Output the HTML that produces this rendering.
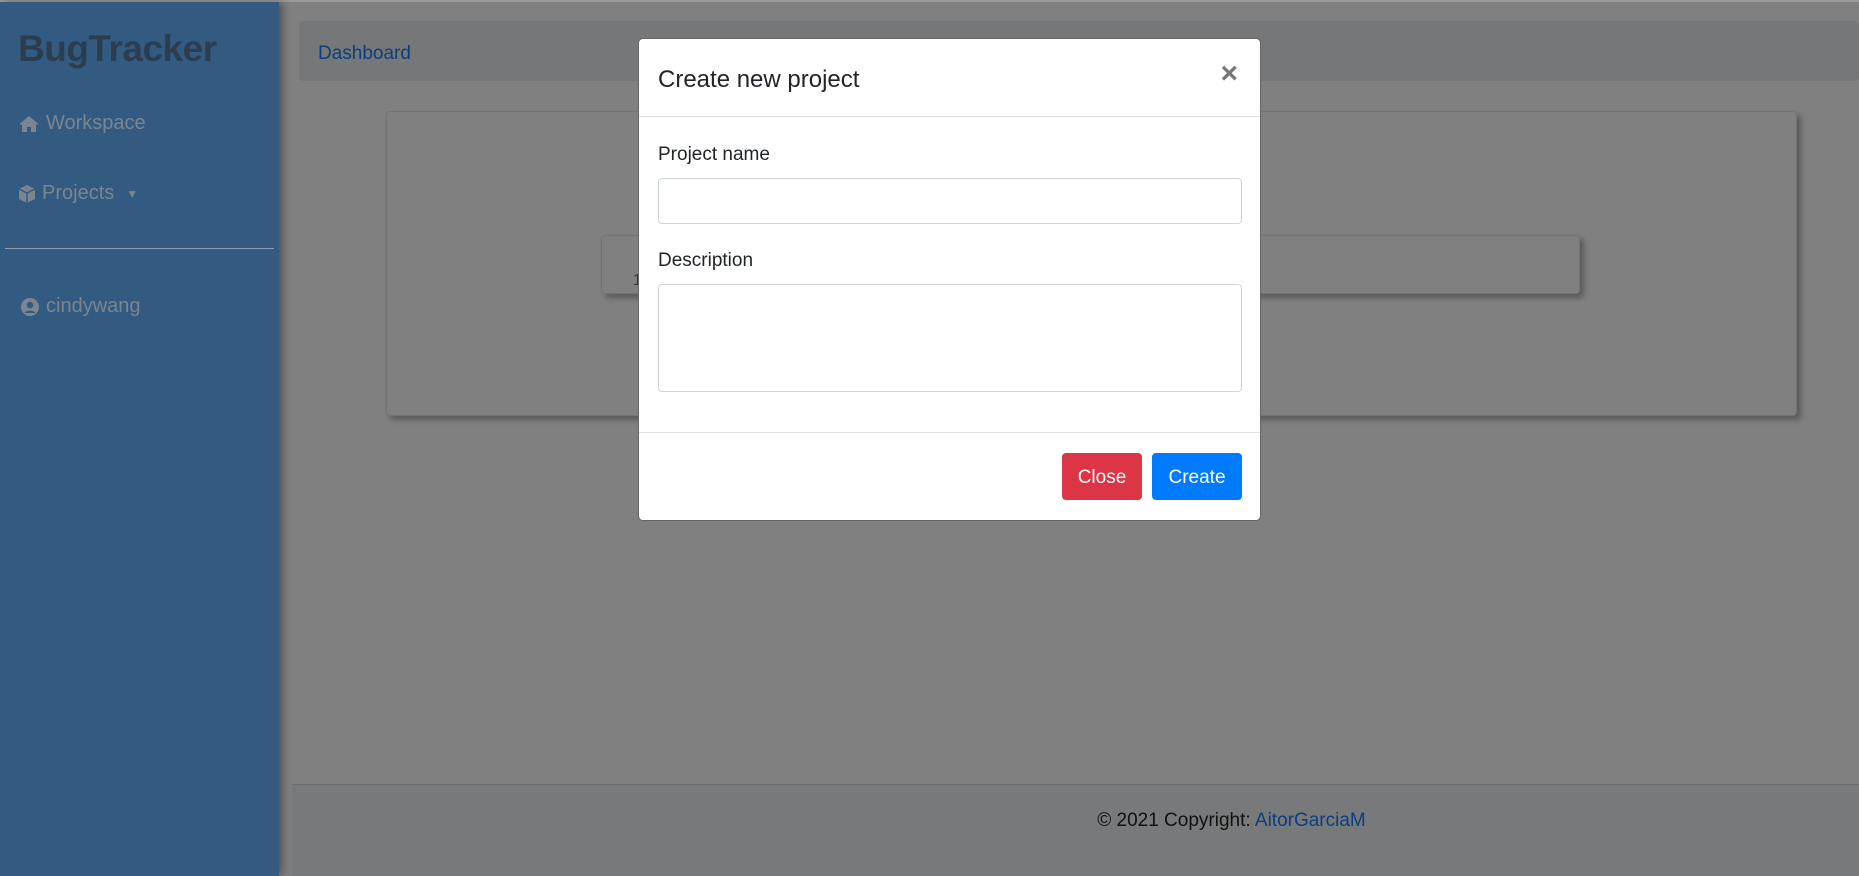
<!DOCTYPE html>
<html><head><meta charset="utf-8"><style>
*{box-sizing:border-box;margin:0;padding:0}
body{width:1859px;height:876px;overflow:hidden;font-family:"Liberation Sans",sans-serif;background:#808080;position:relative}
.top{position:absolute;left:0;top:0;width:1859px;height:2px;background:#9a9a9a}
.side{position:absolute;left:0;top:2px;width:279px;height:874px;background:#335a80;box-shadow:4px 0 8px rgba(0,0,0,.35)}
.brand{position:absolute;left:18px;top:26px;font-size:37px;font-weight:bold;color:#2c3d50;letter-spacing:-0.5px}
.nav{position:absolute;left:18px;font-size:20px;color:#7a8590;display:flex;align-items:center;gap:6px}
.hr{position:absolute;left:5px;top:246px;width:269px;height:1px;background:#8a9bb0}
.crumb{position:absolute;left:299px;top:21px;width:1560px;height:60px;background:#767778;border-radius:4px}
.crumb span{position:absolute;left:19px;top:22px;font-size:19px;color:#0c3e80}
.card{position:absolute;left:386px;top:111px;width:1411px;height:305px;background:#808080;border:1px solid #747474;border-radius:4px;box-shadow:4px 4px 6px rgba(0,0,0,.3)}
.inner{position:absolute;left:601px;top:235px;width:979px;height:59px;background:#808080;border:1px solid #747474;border-radius:4px;box-shadow:4px 4px 6px rgba(0,0,0,.3)}
.inner span{position:absolute;left:31px;top:36px;font-size:16px;color:#333}
.foot{position:absolute;left:292px;top:784px;width:1567px;height:92px;background:#78797a;border-top:1px solid #6e6e6e}
.foot p{position:absolute;left:0;right:0;top:25px;text-align:center;font-size:19px;color:#111;padding-left:312px}
.foot a{color:#0c3e80;text-decoration:none}
.modal{position:absolute;left:638px;top:38px;width:623px;height:483px;background:#fff;border-radius:5px;border:1px solid #666}
.mh{height:78px;border-bottom:1px solid #dee2e6;position:relative}
.mh h5{position:absolute;left:19px;top:27px;font-size:24px;font-weight:normal;color:#212529}
.x{position:absolute;right:22px;top:18px;font-size:30px;color:#777;font-weight:bold}
.lbl{position:absolute;left:19px;font-size:19px;color:#212529}
.inp{position:absolute;left:19px;width:584px;border:1px solid #ced4da;border-radius:4px}
.mf{position:absolute;left:0;top:393px;width:621px;border-top:1px solid #dee2e6}
.btn{position:absolute;top:414px;height:47px;border-radius:4px;color:#fff;font-size:19px;display:flex;align-items:center;justify-content:center;padding-top:3px}
</style></head><body>
<div class="top"></div>
<div class="side">
<div class="brand">BugTracker</div>
<div class="nav" style="top:110px"><svg width="22" height="18" viewBox="0 0 22 18"><path d="M11 1L1 9.5h3V17h5v-5h4v5h5V9.5h3z" fill="#7a8590"/></svg>Workspace</div>
<div class="nav" style="top:180px"><svg width="18" height="20" viewBox="0 0 18 20"><path d="M9 1L1 5v10l8 4 8-4V5z" fill="#7a8590"/><path d="M1 5l8 4 8-4M9 9v10" stroke="#335a80" stroke-width="1.5" fill="none"/></svg>Projects <span style="font-size:12px;margin-left:6px">▼</span></div>
<div class="hr"></div>
<div class="nav" style="top:293px;left:20px"><svg width="20" height="20" viewBox="0 0 20 20"><circle cx="10" cy="10" r="9" fill="#7a8590"/><circle cx="10" cy="8" r="3.3" fill="#335a80"/><path d="M4.5 16c1.5-3 9.5-3 11 0" fill="#335a80"/></svg>cindywang</div>
</div>
<div class="crumb"><span>Dashboard</span></div>
<div class="card"></div>
<div class="inner"><span>1</span></div>
<div class="foot"><p>© 2021 Copyright: <a>AitorGarciaM</a></p></div>
<div class="modal">
<div class="mh"><h5>Create new project</h5><div class="x">×</div></div>
<div class="lbl" style="top:105px">Project name</div>
<div class="inp" style="top:139px;height:46px"></div>
<div class="lbl" style="top:211px">Description</div>
<div class="inp" style="top:245px;height:108px"></div>
<div class="mf"></div>
<div class="btn" style="left:423px;width:80px;background:#dc3545">Close</div>
<div class="btn" style="left:513px;width:90px;background:#007bff">Create</div>
</div>
</body></html>
